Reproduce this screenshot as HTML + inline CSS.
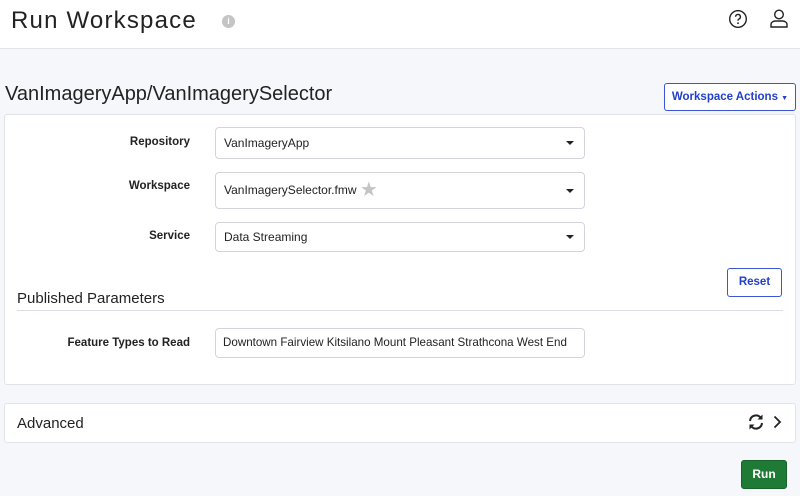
<!DOCTYPE html>
<html><head><meta charset="utf-8"><style>
*{box-sizing:border-box;margin:0;padding:0}
body{width:800px;height:496px;background:#f6f7fb;font-family:"Liberation Sans",sans-serif;position:relative;overflow:hidden;color:#222}
.hdr{position:absolute;left:0;top:0;width:800px;height:49px;background:#fff;border-bottom:1px solid #e2e4ea}
.title{position:absolute;left:11px;top:7px;font-size:24px;letter-spacing:1.2px;color:#222}
.info{position:absolute;left:222px;top:15px;width:13px;height:13px;border-radius:50%;background:#c4c4c4;color:#fff;font-size:9px;font-weight:bold;text-align:center;line-height:13px}
.abs{position:absolute}
.h2{left:5px;top:83px;font-size:20px;color:#222}
.wa{left:664px;top:83px;width:132px;height:28px;border:1px solid #3b55d9;border-radius:3px;background:#fff;color:#2340c8;font-size:11.5px;font-weight:bold;text-align:center;line-height:26px}
.card{left:4px;top:114px;width:792px;height:271px;background:#fff;border:1px solid #e1e3e8;border-radius:3px}
.lbl{font-size:11.5px;font-weight:bold;color:#222;text-align:right;width:190px;left:0}
.sel{left:215px;width:370px;border:1px solid #d3d5da;border-radius:4px;background:#fff;font-size:12px;padding-left:8px;color:#222;white-space:nowrap;overflow:hidden}
.caret{position:absolute;right:10px;top:50%;margin-top:-2px;border-left:4px solid transparent;border-right:4px solid transparent;border-top:4px solid #222}
.reset{left:727px;top:268px;width:55px;height:29px;border:1px solid #3b55d9;border-radius:3px;background:#fff;color:#2340c8;font-size:11.5px;font-weight:bold;text-align:center;line-height:27px}
.pp{left:17px;top:290px;font-size:15px;color:#222}
.line{left:17px;top:310px;width:766px;height:1px;background:#dcdee3}
.adv{left:4px;top:403px;width:792px;height:40px;background:#fff;border:1px solid #e1e3e8;border-radius:3px}
.run{left:741px;top:460px;width:46px;height:29px;background:#1f7a36;border:1px solid #17622a;border-radius:3px;color:#fff;font-size:12px;font-weight:bold;text-align:center;line-height:27px}
</style></head><body>
<div class="hdr">
<div class="title">Run Workspace</div>
<div class="info">i</div>
<svg class="abs" style="left:728px;top:9px" width="20" height="20" viewBox="0 0 20 20"><circle cx="10" cy="10" r="8.3" fill="none" stroke="#222" stroke-width="1.4"/><path d="M7.6 7.8a2.4 2.4 0 1 1 3.4 2.2c-.8.4-1 .9-1 1.7" fill="none" stroke="#222" stroke-width="1.4"/><circle cx="10" cy="14.2" r=".9" fill="#222"/></svg>
<svg class="abs" style="left:769px;top:8px" width="20" height="22" viewBox="0 0 20 22"><circle cx="10" cy="6.5" r="4.3" fill="none" stroke="#222" stroke-width="1.4"/><path d="M2 19v-2.5c0-2 2-3.5 4.5-3.5h7c2.5 0 4.5 1.5 4.5 3.5V19z" fill="none" stroke="#222" stroke-width="1.4"/></svg>
</div>
<div class="abs h2">VanImageryApp/VanImagerySelector</div>
<div class="abs wa">Workspace Actions <span style="font-size:7px">▼</span></div>
<div class="abs card"></div>
<div class="abs lbl" style="top:136px">Repository</div>
<div class="abs sel" style="top:127px;height:32px;line-height:30px">VanImageryApp<span class="caret"></span></div>
<div class="abs lbl" style="top:180px">Workspace</div>
<div class="abs sel" style="top:172px;height:37px;line-height:35px">VanImagerySelector.fmw <span style="color:#c4c4c4;font-size:20px;vertical-align:-2px">★</span><span class="caret"></span></div>
<div class="abs lbl" style="top:230px">Service</div>
<div class="abs sel" style="top:222px;height:30px;line-height:28px">Data Streaming<span class="caret"></span></div>
<div class="abs reset">Reset</div>
<div class="abs pp">Published Parameters</div>
<div class="abs line"></div>
<div class="abs lbl" style="top:337px">Feature Types to Read</div>
<div class="abs sel" style="top:328px;height:30px;line-height:28px;padding-left:7px;font-size:11.6px">Downtown Fairview Kitsilano Mount Pleasant Strathcona West End</div>
<div class="abs adv"></div>
<div class="abs" style="left:17px;top:415px;font-size:15px">Advanced</div>
<svg class="abs" style="left:747px;top:413px" width="18" height="18" viewBox="0 0 18 18"><path d="M3 8a6 6 0 0 1 10.5-3.5M15 10a6 6 0 0 1-10.5 3.5" fill="none" stroke="#222" stroke-width="2"/><path d="M15.5 1.5v5h-5z M2.5 16.5v-5h5z" fill="#222"/></svg>
<svg class="abs" style="left:773px;top:415px" width="9" height="14" viewBox="0 0 9 14"><path d="M1.5 1.5 7 7l-5.5 5.5" fill="none" stroke="#222" stroke-width="1.8"/></svg>
<div class="abs run">Run</div>
</body></html>
